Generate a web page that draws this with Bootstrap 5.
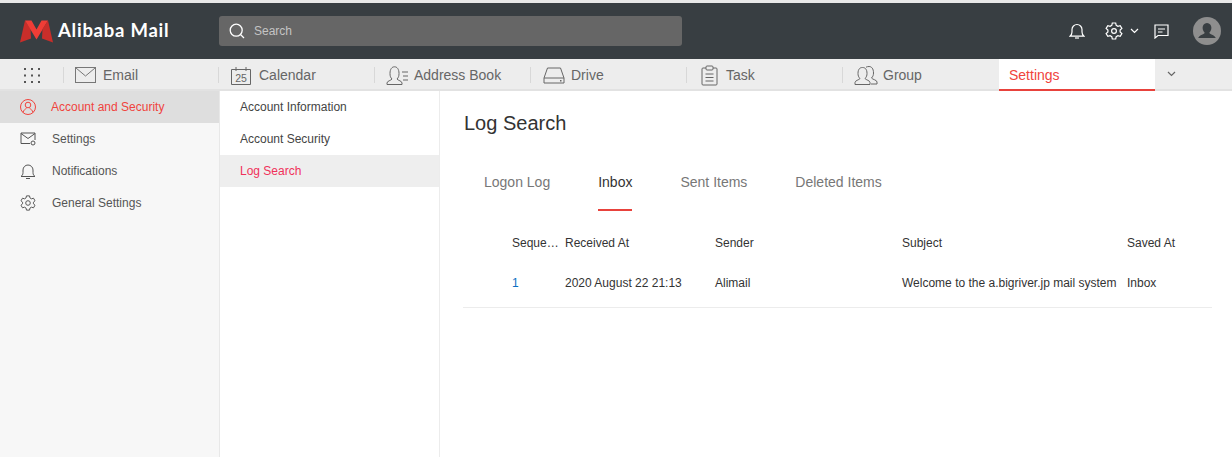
<!DOCTYPE html>
<html lang="en">
<head>
  <meta charset="UTF-8">
  <title>Alibaba Mail</title>
  <link href="https://cdn.jsdelivr.net/npm/bootstrap@5.3.0/dist/css/bootstrap.min.css" rel="stylesheet">
  <style>
    html, body { height: 100%; }
    body { font-family: "Liberation Sans", Arial, sans-serif; overflow: hidden; padding-top: 3px; background-color: #e8e8e8; }
    svg { display: block; flex: none; fill: none; stroke: currentColor; }
    .top-bar { height: 56px; background: #383e42; padding-left: 20px; }
    .logo-box { width: 199px; color: #fff; }
    .logo-text { font-family: "Lato", sans-serif; font-weight: 700; font-size: 18.5px; letter-spacing: .75px; margin-left: 5px; white-space: nowrap; }
    .search-box { width: 463px; height: 30px; background: #666; border-radius: 3px; padding-left: 10px; color: #fff; font-size: 12px; }
    .search-box span { color: #c4c4c4; margin-left: 9px; }
    .top-icons { color: #fff; padding-right: 11px; }
    .avatar-dot { width: 28px; height: 28px; border-radius: 50%; background: #8e8e8e; overflow: hidden; margin-left: 24px; }
    .app-nav { height: 32px; background: #ededed; border-bottom: 2px solid #e2e2e2; color: #666; font-size: 14px; }
    .dots-cell { width: 63px; padding-left: 24px; color: #555; }
    .app-tab { width: 156px; height: 30px; padding-top: 2px; padding-left: 12px; gap: 7px; position: relative; white-space: nowrap; color: #666; }
    .app-tab::before { content: ""; position: absolute; left: -1px; top: 8px; height: 16px; border-left: 1px solid #d8d8d8; }
    .app-tab.first-tab::before { left: 0; }
    .app-tab.active-tab { background: #fff; color: #f0433d; height: 32px; border-bottom: 2px solid #e8423c; padding-left: 10px; margin-bottom: -2px; }
    .app-tab.active-tab::before { display: none; }
    .more-cell { margin-left: 12px; color: #666; }
    .page-body { height: 366px; background: #fff; }
    .side-one { width: 220px; background: #f7f7f7; border-right: 1px solid #e8e8e8; font-size: 12px; color: #555; }
    .side-item { height: 32px; padding-left: 20px; gap: 16px; }
    .side-item.on { background: #dedede; color: #f0433d; gap: 15px; }
    .side-two { width: 220px; border-right: 1px solid #ececec; font-size: 12px; color: #444; }
    .sub-item { height: 32px; padding-left: 20px; }
    .sub-item.on { background: #eeeeee; color: #f0315a; }
    .main-pane { padding-left: 24px; width: 792px; }
    .page-title { font-size: 20px; font-weight: 400; color: #333; line-height: 24px; margin: 20px 0 0; }
    .log-tabs { margin-top: 20px; padding-left: 20px; gap: 48px; font-size: 14px; color: #777; height: 56px; }
    .log-tab { height: 56px; line-height: 54px; white-space: nowrap; }
    .log-tab.on { color: #333; border-bottom: 2px solid #e8423c; }
    .log-table { table-layout: fixed; width: 749px; margin-left: -1px; font-size: 12px; color: #333; margin-top: 12px; }
    .log-table td, .log-table th { font-weight: 400; padding: 0 0 0 1px; white-space: nowrap; overflow: hidden; }
    .log-table th { height: 40px; }
    .log-table td { height: 44px; padding-bottom: 3px; border-bottom: 1px solid #ececec; }
    .seq-cell { overflow: hidden; text-overflow: ellipsis; padding-left: 49px !important; }
    .seq-link { color: #0b6fc2; }
  </style>
</head>
<body>

  <header class="top-bar d-flex align-items-center">
    <div class="logo-box d-flex align-items-center">
      <svg width="33" height="23" viewBox="0 0 33 23" style="stroke:none">
        <path d="M5 .5 L0 22.500 L11 18.500 L10.500 9 Z" fill="#c92e2a"/>
        <path d="M5 .5 H11.500 L16.500 9.500 L21.500 .5 H28 L16.500 19.500 Z" fill="#ef3d36"/>
        <path d="M28 .5 L33 22.500 L22 18.500 L22.500 9 Z" fill="#c92e2a"/>
      </svg>
      <span class="logo-text">Alibaba Mail</span>
    </div>
    <div class="search-box d-flex align-items-center">
      <svg width="16" height="16" viewBox="0 0 16 16" stroke-width="1.3"><circle cx="7.2" cy="7.2" r="6"/><path d="M11.5 11.5l3.5 3.5"/></svg>
      <span>Search</span>
    </div>
    <div class="top-icons ms-auto d-flex align-items-center">
      <svg width="16" height="16" viewBox="0 0 16 16" stroke-width="1.2"><path d="M1 13.200c1.300-1 2-2 2-4.200V6.500a5 5 0 0 1 10 0V9c0 2.200.7 3.200 2 4.200z"/><path d="M6 15h4"/></svg>
      <svg width="18" height="18" viewBox="0 0 18 18" stroke-width="1.2" style="margin-left:20px"><path d="M7.300 1h3.400l.5 2.300 1.700 1 2.300-.7 1.700 2.900-1.800 1.600v1.800l1.800 1.600-1.700 2.900-2.300-.7-1.700 1-.5 2.300H7.300l-.5-2.300-1.700-1-2.300.7-1.700-2.900 1.800-1.600V8.100L1.100 6.500l1.700-2.900 2.300.7 1.700-1z"/><circle cx="9" cy="9" r="2.400"/></svg>
      <svg width="9" height="6" viewBox="0 0 9 6" stroke-width="1.2" style="margin-left:7px"><path d="M1 1l3.500 3.500L8 1"/></svg>
      <svg width="15" height="15" viewBox="0 0 15 15" stroke-width="1.200" style="margin-left:15px"><path d="M1 1h13v10.500H4L1 14z"/><path d="M4 5h7M4 8h4.500"/></svg>
      <div class="avatar-dot">
        <svg width="28" height="28" viewBox="0 0 28 28" style="stroke:none"><path d="M14 6c2.800 0 4.400 2.200 4.400 4.800 0 2-.9 3.700-2.100 4.900 0 1.300 5.200 2 6.500 5.300H5.200c1.300-3.300 6.500-4 6.500-5.300-1.200-1.200-2.100-2.900-2.100-4.900C9.600 8.200 11.200 6 14 6z" fill="#383e42"/></svg>
      </div>
    </div>
  </header>

  <nav class="app-nav d-flex align-items-start">
    <div class="dots-cell d-flex align-items-center" style="height:32px">
      <svg width="16" height="15" viewBox="0 0 16 15" style="stroke:none;fill:#555">
        <rect x="0" y="0" width="2" height="2"/><rect x="7" y="0" width="2" height="2"/><rect x="14" y="0" width="2" height="2"/>
        <rect x="0" y="6.500" width="2" height="2"/><rect x="7" y="6.500" width="2" height="2"/><rect x="14" y="6.500" width="2" height="2"/>
        <rect x="0" y="13" width="2" height="2"/><rect x="7" y="13" width="2" height="2"/><rect x="14" y="13" width="2" height="2"/>
      </svg>
    </div>
    <div class="app-tab first-tab d-flex align-items-center">
      <svg width="21" height="16" viewBox="0 0 21 16"><rect x=".5" y=".5" width="20" height="15" stroke="#777"/><path d="M1 1l9.500 8L20 1" stroke="#777"/></svg>
      <span>Email</span>
    </div>
    <div class="app-tab d-flex align-items-center" style="gap:8px">
      <svg width="20" height="19" viewBox="0 0 20 19" stroke="#666"><path d="M.5 3.500h19v15H.5z"/><path d="M5 1v4M15 1v4"/><text x="10" y="15.500" text-anchor="middle" font-size="10.500" font-family="Liberation Sans" fill="#666" stroke="none">25</text></svg>
      <span>Calendar</span>
    </div>
    <div class="app-tab d-flex align-items-center" style="padding-left:11px;gap:5px">
      <svg width="23" height="19" viewBox="0 0 23 19" stroke="#777"><path d="M1 18.500v-1.500c0-2 4-2.500 5-4-1.500-1.500-2-3-2-5.500C4 3 6 .8 8.500.8S13 3 13 7.500c0 2.500-.5 4-2 5.500 1 1.500 5 2 5 4v1.500z"/><path d="M16 6h6M17 10h5M17 14h5"/></svg>
      <span>Address Book</span>
    </div>
    <div class="app-tab d-flex align-items-center" style="gap:6px">
      <svg width="22" height="17" viewBox="0 0 22 17" stroke="#666"><path d="M1 11L4.500 1h13L21 11v5H1z"/><path d="M1 11h20"/><rect x="17" y="13" width="1.500" height="1.500" fill="#666" stroke="none"/></svg>
      <span>Drive</span>
    </div>
    <div class="app-tab d-flex align-items-center" style="padding-left:14px;gap:8px">
      <svg width="17" height="21" viewBox="0 0 17 21" stroke="#666"><rect x="1" y="3" width="15" height="17" rx="1"/><rect x="5" y="1" width="7" height="4" rx="1" fill="#ededed"/><path d="M4.500 9h8M4.500 12.500h8M4.500 16h8"/></svg>
      <span>Task</span>
    </div>
    <div class="app-tab d-flex align-items-center" style="padding-left:11px;gap:5px">
      <svg width="24" height="19" viewBox="0 0 24 19" stroke="#888"><path d="M1 18.500v-2c0-2 4-2.500 5-4-1.500-1.500-2-3-2-5C4 3 6 1.500 8.500 1.500S13 3 13 7.500c0 2-.5 3.500-2 5 1 1.500 5 2 5 4v2z"/><path d="M12 1.200C13 .7 14 .5 15 .5c2.500 0 4.500 2 4.500 6.500 0 2-.5 3.500-2 5 1 1.500 5.500 2 5.500 4v2h-6"/></svg>
      <span>Group</span>
    </div>
    <div class="app-tab active-tab d-flex align-items-center"><span>Settings</span></div>
    <div class="more-cell d-flex align-items-center" style="height:30px">
      <svg width="9" height="6" viewBox="0 0 9 6" stroke-width="1.200"><path d="M1 1l3.500 3.500L8 1"/></svg>
    </div>
  </nav>

  <div class="page-body d-flex">
    <aside class="side-one">
      <div class="side-item on d-flex align-items-center">
        <svg width="16" height="16" viewBox="0 0 16 16"><circle cx="8" cy="8" r="7.500"/><circle cx="8" cy="6" r="2.800"/><path d="M3 13.500c.5-2.500 2.500-3.500 3.500-4.300M13 13.500c-.5-2.500-2.500-3.500-3.500-4.300"/></svg>
        <span>Account and Security</span>
      </div>
      <div class="side-item d-flex align-items-center">
        <svg width="16" height="14" viewBox="0 0 16 14"><path d="M10 11.500H1V1h14v7"/><path d="M1 1.500L8 6.500l7-5"/><circle cx="13" cy="11" r="2"/></svg>
        <span>Settings</span>
      </div>
      <div class="side-item d-flex align-items-center">
        <svg width="16" height="15" viewBox="0 0 16 15"><path d="M1 12.500c1.300-1 2-2 2-4V6a5 5 0 0 1 10 0v2.500c0 2 .7 3 2 4z"/><path d="M6 14.500h4"/></svg>
        <span>Notifications</span>
      </div>
      <div class="side-item d-flex align-items-center">
        <svg width="16" height="16" viewBox="0 0 18 18" stroke-width="1.100"><path d="M7.300 1h3.400l.5 2.300 1.700 1 2.300-.7 1.700 2.900-1.800 1.600v1.800l1.800 1.600-1.700 2.900-2.300-.7-1.700 1-.5 2.300H7.300l-.5-2.300-1.700-1-2.300.7-1.700-2.900 1.800-1.600V8.100L1.100 6.500l1.700-2.900 2.300.7 1.700-1z"/><circle cx="9" cy="9" r="2.600"/></svg>
        <span>General Settings</span>
      </div>
    </aside>
    <div class="side-two">
      <div class="sub-item d-flex align-items-center">Account Information</div>
      <div class="sub-item d-flex align-items-center">Account Security</div>
      <div class="sub-item on d-flex align-items-center">Log Search</div>
    </div>
    <main class="main-pane">
      <h1 class="page-title">Log Search</h1>
      <div class="log-tabs d-flex">
        <div class="log-tab">Logon Log</div>
        <div class="log-tab on">Inbox</div>
        <div class="log-tab">Sent Items</div>
        <div class="log-tab">Deleted Items</div>
      </div>
      <table class="log-table">
        <colgroup><col style="width:101px"><col style="width:150px"><col style="width:187px"><col style="width:225px"><col></colgroup>
        <thead>
          <tr><th class="seq-cell">Sequence</th><th>Received At</th><th>Sender</th><th>Subject</th><th>Saved At</th></tr>
        </thead>
        <tbody>
          <tr><td class="seq-cell"><span class="seq-link">1</span></td><td>2020 August 22 21:13</td><td>Alimail</td><td>Welcome to the a.bigriver.jp mail system</td><td>Inbox</td></tr>
        </tbody>
      </table>
    </main>
  </div>

  <script src="https://cdn.jsdelivr.net/npm/bootstrap@5.3.0/dist/js/bootstrap.bundle.min.js"></script>
</body>
</html>
